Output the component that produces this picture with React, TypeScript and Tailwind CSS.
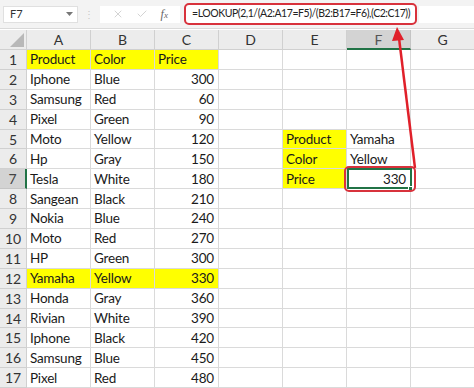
import { X, Check } from "lucide-react";

const cols = ["A", "B", "C", "D", "E", "F", "G"];

type Row = (string | number | null)[];

const rows: Row[] = [
    ["Product", "Color", "Price", null, null, null, null],
    ["Iphone", "Blue", 300, null, null, null, null],
    ["Samsung", "Red", 60, null, null, null, null],
    ["Pixel", "Green", 90, null, null, null, null],
    ["Moto", "Yellow", 120, null, "Product", "Yamaha", null],
    ["Hp", "Gray", 150, null, "Color", "Yellow", null],
    ["Tesla", "White", 180, null, "Price", 330, null],
    ["Sangean", "Black", 210, null, null, null, null],
    ["Nokia", "Blue", 240, null, null, null, null],
    ["Moto", "Red", 270, null, null, null, null],
    ["HP", "Green", 300, null, null, null, null],
    ["Yamaha", "Yellow", 330, null, null, null, null],
    ["Honda", "Gray", 360, null, null, null, null],
    ["Rivian", "White", 390, null, null, null, null],
    ["Iphone", "Black", 420, null, null, null, null],
    ["Samsung", "Blue", 450, null, null, null, null],
    ["Pixel", "Red", 480, null, null, null, null],
];

function isYellow(r: number, c: number) {
    if ((r === 0 || r === 11) && c <= 2) return true;
    if (c === 4 && r >= 4 && r <= 6) return true;
    return false;
}

export default function App() {
    return (
        <div className="relative w-[474px] h-[388px] overflow-hidden bg-white font-['Lato','Liberation_Sans',sans-serif] text-[#1a1a1a]">
            {/* Formula bar */}
            <div className="h-[29px] bg-[#f3f3f3] flex items-center border-b border-[#dadada]">
                <div className="ml-[3px] w-[75px] h-[17px] bg-white border border-[#e0e0e0] flex items-center justify-between pl-[6px] pr-[4px] text-[11px] text-[#333]">
                    <span>F7</span>
                    <svg width="7" height="4" viewBox="0 0 7 4"><path d="M0 0h7L3.5 4z" fill="#777" /></svg>
                </div>
                <div className="w-[22px] flex justify-center text-[#c8c8c8] text-[10px] leading-none">⋮</div>
                <div className="w-[80px] h-[17px] bg-white flex items-center justify-around px-[6px] text-[#c4c4c4]">
                    <X size={12} strokeWidth={1.5} />
                    <Check size={12} strokeWidth={1.5} />
                    <span className="font-['Liberation_Serif',serif] italic text-[12px] text-[#666]">f<span className="text-[9px]">x</span></span>
                </div>
                <div className="ml-[4px] w-[233px] h-[22px] bg-white border-2 border-[#d8323c] rounded-[5px] flex items-center pl-[6px] text-[10.5px] text-[#222] tracking-[-0.45px] whitespace-nowrap overflow-hidden">
                    =LOOKUP(2,1/(A2:A17=F5)/(B2:B17=F6),(C2:C17))
                </div>
                <div className="flex-1 h-[17px] bg-white ml-[2px]" />
            </div>

            {/* Grid */}
            <div className="grid grid-cols-[27px_repeat(7,64px)] grid-rows-[20px_repeat(17,19.9px)] mt-[1px]">
                <div className="bg-[#ececec] border-r border-b border-[#d0d0d0] flex items-end justify-end p-[2px]">
                    <svg width="14" height="14" viewBox="0 0 14 14"><path d="M14 0V14H0z" fill="#b8b8b8" /></svg>
                </div>
                {cols.map((c) => (
                    <div
                        key={c}
                        className={
                            c === "F"
                                ? "bg-[#d3d3d3] border-r border-[#c4c4c4] border-b-2 border-b-[#217346] flex items-center justify-center text-[14px] text-[#555]"
                                : "bg-[#ececec] border-r border-b border-[#d0d0d0] flex items-center justify-center text-[14px] text-[#333]"
                        }
                    >
                        {c}
                    </div>
                ))}
                {rows.map((row, r) => (
                    <>
                        <div
                            key={`h${r}`}
                            className={
                                r === 6
                                    ? "bg-[#d3d3d3] border-b border-[#c4c4c4] border-r-2 border-r-[#217346] flex items-center justify-center text-[14px] text-[#444]"
                                    : "bg-[#ececec] border-r border-b border-[#d0d0d0] flex items-center justify-center text-[14px] text-[#333]"
                            }
                        >
                            {r + 1}
                        </div>
                        {row.map((v, c) => (
                            <div
                                key={`${r}-${c}`}
                                className={`border-r border-b border-[#dadada] flex items-center text-[13.5px] tracking-[-0.2px] whitespace-nowrap ${
                                    typeof v === "number" ? "justify-end pr-[4px]" : "pl-[3px]"
                                } ${isYellow(r, c) ? "bg-[#ffff00]" : "bg-white"}`}
                            >
                                {v}
                            </div>
                        ))}
                    </>
                ))}
            </div>

            {/* Selected cell F7 */}
            <div className="absolute left-[347px] top-[168px] w-[65px] h-[21px] border-2 border-[#217346]" />
            <div className="absolute left-[408px] top-[186px] w-[5px] h-[5px] bg-[#217346] border border-white" />
            <div className="absolute left-[344px] top-[166px] w-[72px] h-[26px] border-2 border-[#d8323c] rounded-[5px]" />

            {/* Arrow */}
            <svg className="absolute left-0 top-0" width="474" height="388" viewBox="0 0 474 388">
                <line x1="415" y1="168" x2="399" y2="38" stroke="#e0202a" strokeWidth="2.5" />
                <path d="M397 27 L392 41 L404 40 z" fill="#e0202a" />
            </svg>
        </div>
    );
}
